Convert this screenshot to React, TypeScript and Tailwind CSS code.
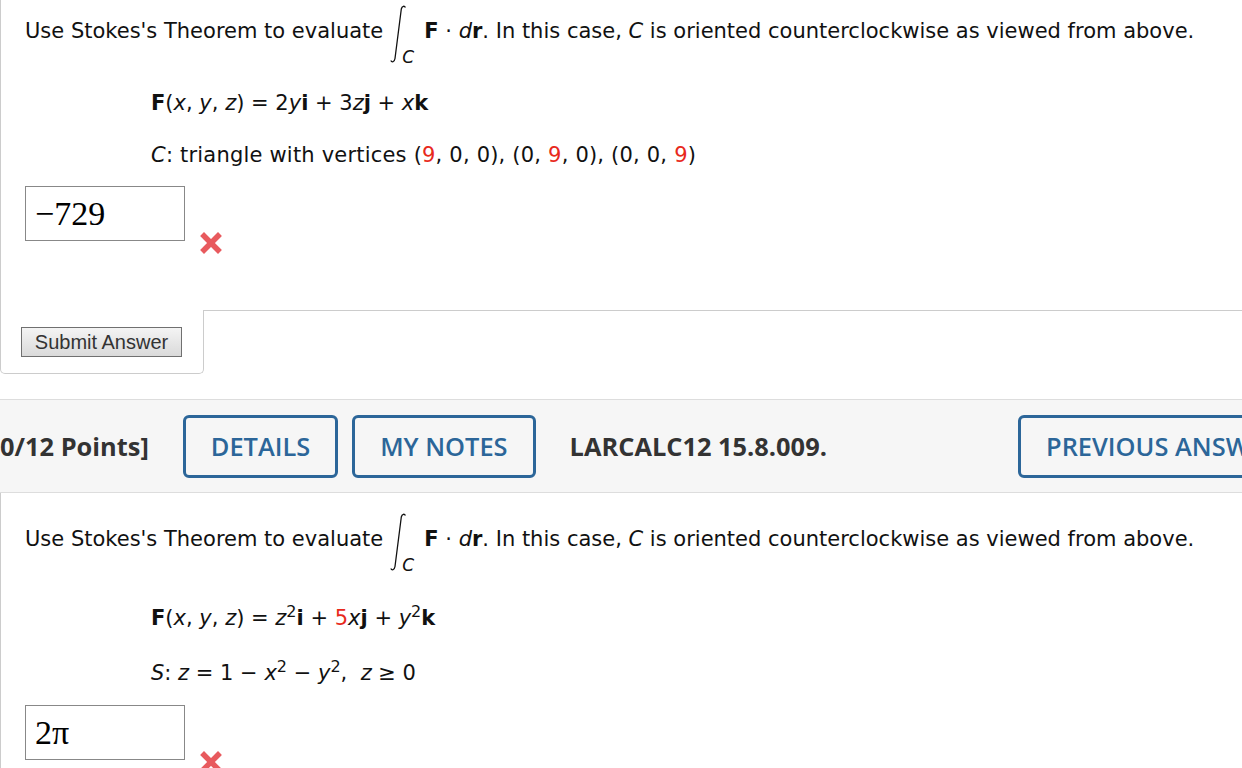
import React from 'react';

const body = "font-['DejaVu_Sans',Verdana,sans-serif] text-[21px] leading-[24px] text-[#111]";
const head = "font-['Open_Sans',sans-serif] text-[25.4px]";

const Red = ({ children }: { children: React.ReactNode }) => <span className="text-[#e8291c]">{children}</span>;
const I = ({ children }: { children: React.ReactNode }) => <i>{children}</i>;
const B = ({ children }: { children: React.ReactNode }) => <b>{children}</b>;

const Integral = () => (
  <span className="relative ml-[7px] mr-[10px] inline-block h-[58px] w-[24px] shrink-0">
    <svg viewBox="0 0 16 58" className="absolute left-0 top-0 h-[58px] w-[16px]" fill="none" stroke="#111" strokeWidth="1.3">
      <path d="M15.5 2.6 C14.6 0.6, 12 0.6, 11.3 4 L5 53.5 C4.4 57.3, 1.8 57.6, 0.8 55.4" />
    </svg>
    <span className="absolute left-[12px] top-[44px] text-[17px] italic leading-none">C</span>
  </span>
);

const WrongMark = () => (
  <svg viewBox="0 0 24 22" className="h-[22px] w-[24px]">
    <g stroke="#e85a5e" strokeWidth="5.5" strokeLinecap="square">
      <path d="M5 4 L19 18" />
      <path d="M19 4 L5 18" />
    </g>
  </svg>
);

const Prompt = () => (
  <div className="flex items-start pt-[5px]">
    <span className="mt-[14px] whitespace-nowrap">Use Stokes's Theorem to evaluate</span>
    <Integral />
    <span className="mt-[14px] whitespace-nowrap">
      <B>F</B> · <I>d</I><B>r</B>. In this case, <I>C</I> is oriented counterclockwise as viewed from above.
    </span>
  </div>
);

const AnswerBox = ({ value }: { value: string }) => (
  <div className="flex items-start">
    <div className="flex h-[55px] w-[160px] items-center border border-[#888] bg-white pl-[9px] font-['Liberation_Serif',serif] text-[34px] text-black">
      {value}
    </div>
    <div className="ml-[14px] mt-[46px]">
      <WrongMark />
    </div>
  </div>
);

const HeadButton = ({ label, className = '' }: { label: string; className?: string }) => (
  <button className={`${head} h-[63px] shrink-0 rounded-[6px] border-[3px] border-[#2c6699] px-[25px] font-semibold text-[#2c6699] ${className}`}>
    {label}
  </button>
);

export default function App() {
  return (
    <div className={`h-[768px] w-[1242px] overflow-hidden bg-white ${body}`}>
      {/* first question */}
      <div className="border-l border-[#ccc] pb-[56px] pl-[24px]">
        <Prompt />
        <div className="ml-[126px] mt-[28px] whitespace-nowrap">
          <B>F</B>(<I>x</I>, <I>y</I>, <I>z</I>) = 2<I>y</I><B>i</B> + 3<I>z</I><B>j</B> + <I>x</I><B>k</B>
        </div>
        <div className="ml-[126px] mt-[28px] whitespace-nowrap tracking-[0.2px]">
          <I>C</I>: triangle with vertices (<Red>9</Red>, 0, 0), (0, <Red>9</Red>, 0), (0, 0, <Red>9</Red>)
        </div>
        <div className="mt-[19px]">
          <AnswerBox value="−729" />
        </div>
      </div>
      <div className="flex">
        <div className="h-[64px] w-[204px] rounded-b-[5px] border-x border-b border-[#ccc] pl-[20px] pt-[17px]">
          <button className="h-[30px] w-[161px] border border-[#707070] bg-gradient-to-b from-[#f4f4f4] to-[#dadada] font-['Liberation_Sans',Arial,sans-serif] text-[20px] leading-none text-[#333]">
            Submit Answer
          </button>
        </div>
        <div className="flex-1 border-t border-[#ccc]" />
      </div>

      {/* header bar */}
      <div className="mt-[25px] flex h-[94px] items-center whitespace-nowrap border-y border-[#ddd] bg-[#f6f6f6]">
        <span className={`${head} font-bold text-[#333]`}>0/12 Points]</span>
        <HeadButton label="DETAILS" className="ml-[34px]" />
        <HeadButton label="MY NOTES" className="ml-[14px]" />
        <span className={`${head} ml-[34px] font-bold text-[#333]`}>LARCALC12 15.8.009.</span>
        <HeadButton label="PREVIOUS ANSWERS" className="ml-auto -mr-[80px] text-left" />
      </div>

      {/* second question */}
      <div className="border-l border-[#ccc] pb-[40px] pl-[24px] pt-[15px]">
        <Prompt />
        <div className="ml-[126px] mt-[35px] whitespace-nowrap">
          <B>F</B>(<I>x</I>, <I>y</I>, <I>z</I>) = <I>z</I><sup className="text-[16px]">2</sup><B>i</B> + <Red>5</Red><I>x</I><B>j</B> + <I>y</I><sup className="text-[16px]">2</sup><B>k</B>
        </div>
        <div className="ml-[126px] mt-[31px] whitespace-nowrap">
          <I>S</I>: <I>z</I> = 1 − <I>x</I><sup className="text-[16px]">2</sup> − <I>y</I><sup className="text-[16px]">2</sup>,&nbsp; <I>z</I> ≥ 0
        </div>
        <div className="mt-[20px]">
          <AnswerBox value="2π" />
        </div>
      </div>
    </div>
  );
}
